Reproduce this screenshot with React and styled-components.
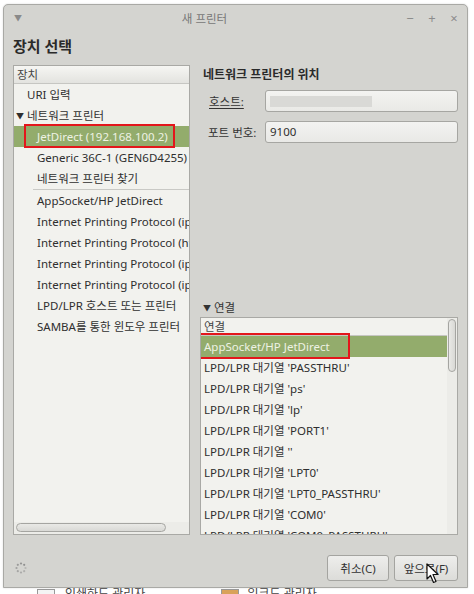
import React from "react";
import styled, { createGlobalStyle } from "styled-components";

const Global = createGlobalStyle`
  html, body { margin: 0; padding: 0; background: #ffffff; }
  body { width: 474px; height: 594px; overflow: hidden; font-family: "Noto Sans", "Noto Sans CJK KR", sans-serif; color: #2f2f2f; }
  * { box-sizing: border-box; }
`;

const Page = styled.div`
  width: 474px;
  height: 594px;
  padding: 4px 6px 0 3px;
  overflow: hidden;
`;

const Window = styled.div`
  position: relative;
  width: 465px;
  height: 584px;
  background: #d4d4d0;
  border: 1px solid #a9a9a5;
  border-radius: 5px 5px 0 0;
  display: flex;
  flex-direction: column;
  box-shadow: 0 0 2px rgba(0,0,0,0.15);
`;

const TitleBar = styled.div`
  height: 25px;
  display: flex;
  align-items: center;
  padding: 0 8px 0 10px;
  color: #7a7a7a;
  font-size: 11.5px;
`;

const TitleMenu = styled.span`
  width: 20px;
  font-size: 8px;
  color: #8a8a8a;
`;

const Title = styled.div`
  flex: 1;
  text-align: center;
  padding-left: 10px;
  padding-right: 40px;
  color: #777;
`;

const WinControls = styled.div`
  display: flex;
  gap: 12px;
  font-size: 13px;
  color: #8c8c8c;
  span { width: 10px; text-align: center; }
`;

const Body = styled.div`
  flex: 1;
  display: flex;
  flex-direction: column;
  padding: 0 9px 6px 9px;
`;

const Heading = styled.div`
  font-size: 15px;
  font-weight: 700;
  line-height: 20px;
  margin-top: 6px;
  color: #2a2a2a;
`;

const Main = styled.div`
  margin-top: 9px;
  height: 470px;
  display: flex;
  gap: 10px;
`;

const DevicePanel = styled.div`
  width: 177px;
  display: flex;
  flex-direction: column;
  background: #f2f2ee;
  border: 1px solid #a9a9a5;
`;

const PanelHeader = styled.div`
  height: 18px;
  line-height: 17px;
  padding-left: ${(p) => p.$pad || 3}px;
  font-size: 11.5px;
  color: #444;
  background: ${(p) => (p.$flat ? "#f2f2ee" : "linear-gradient(#f6f6f3, #e3e3df)")};
  border-bottom: 1px solid #c6c6c2;
  flex: none;
`;

const List = styled.div`
  flex: 1;
  overflow: hidden;
  display: flex;
  flex-direction: column;
`;

const Row = styled.div`
  position: relative;
  flex: none;
  height: 21px;
  line-height: 21px;
  padding-left: ${(p) => p.$indent}px;
  font-size: 11.5px;
  white-space: nowrap;
  background: ${(p) => (p.$selected ? "#93ac6c" : "transparent")};
  color: ${(p) => (p.$selected ? "#eef2e4" : "#2f2f2f")};
`;

const Arrow = styled.span`
  display: inline-block;
  width: 11px;
  font-size: 8px;
  vertical-align: 1px;
`;

const Separator = styled.div`
  height: 1px;
  margin-left: 19px;
  background: #c9c9c5;
  flex: none;
`;

const Annotation = styled.div`
  position: absolute;
  left: ${(p) => p.$left}px;
  top: ${(p) => p.$top}px;
  width: ${(p) => p.$width}px;
  height: ${(p) => p.$height}px;
  border: 2px solid #e3161b;
  pointer-events: none;
`;

const HScroll = styled.div`
  height: 12px;
  padding: 1px 2px 2px 2px;
  background: #ecece8;
  flex: none;
`;

const HThumb = styled.div`
  width: 150px;
  height: 9px;
  border: 1px solid #a5a5a1;
  border-radius: 5px;
  background: linear-gradient(#e9e9e6, #d9d9d5);
`;

const RightCol = styled.div`
  flex: 1;
  display: flex;
  flex-direction: column;
`;

const SectionTitle = styled.div`
  height: 20px;
  line-height: 20px;
  padding-left: 3px;
  font-size: 12px;
  font-weight: 700;
  color: #2a2a2a;
`;

const FormGrid = styled.div`
  margin-top: 5px;
  display: grid;
  grid-template-columns: 57px 1fr;
  row-gap: 9px;
  padding-left: 8px;
  align-items: center;
`;

const Label = styled.span`
  font-size: 11.5px;
  color: #333;
  text-decoration: ${(p) => (p.$underline ? "underline" : "none")};
  text-underline-offset: 2px;
  padding-left: ${(p) => (p.$underline ? 1 : 0)}px;
`;

const Input = styled.div`
  height: 22px;
  border: 1px solid #a6a6a2;
  border-radius: 3px;
  background: linear-gradient(#f3f3f1, #e9e9e6);
  font-size: 11.5px;
  line-height: 20px;
  padding-left: 4px;
  display: flex;
  align-items: center;
`;

const Blurred = styled.div`
  width: 102px;
  height: 11px;
  background: #d9d9d6;
`;

const Expander = styled.div`
  margin-top: auto;
  height: 18px;
  line-height: 18px;
  padding-left: 3px;
  font-size: 11.5px;
  color: #333;
`;

const ConnBox = styled.div`
  height: 218px;
  display: flex;
  background: #f2f2ee;
  border: 1px solid #a9a9a5;
`;

const VScroll = styled.div`
  width: 10px;
  flex: none;
  padding: 1px 1px;
  background: #ecece8;
`;

const VThumb = styled.div`
  height: 53px;
  width: 8px;
  border: 1px solid #a5a5a1;
  border-radius: 4px;
  background: linear-gradient(90deg, #e9e9e6, #d9d9d5);
`;

const Footer = styled.div`
  margin-top: auto;
  display: flex;
  align-items: center;
  gap: 5px;
  padding-left: 1px;
`;

const Spinner = styled.svg`
  margin-right: auto;
`;

const Button = styled.div`
  position: relative;
  width: ${(p) => p.$w}px;
  height: 26px;
  border: 1px solid #a4a4a0;
  border-radius: 3px;
  background: linear-gradient(#eeeeec, #dcdcd9);
  font-size: 11.5px;
  color: #333;
  display: flex;
  align-items: center;
  justify-content: center;
`;

const Cursor = styled.svg`
  position: absolute;
  left: 31px;
  top: 7px;
`;

const DesktopStrip = styled.div`
  display: flex;
  align-items: flex-start;
  height: 10px;
  padding-left: 34px;
  font-size: 12px;
  color: #444;
  line-height: 14px;
  margin-top: 0px;
`;

const DeskIcon = styled.div`
  width: 18px;
  height: 10px;
  margin-top: 1px;
  border: 1px solid #999;
  border-bottom: none;
  background: ${(p) => p.$bg};
  margin-right: ${(p) => p.$mr}px;
`;

const DeskText = styled.span`
  margin-top: -1px;
  margin-right: ${(p) => p.$mr}px;
`;

const leftRows = [
  { t: "URI 입력", indent: 13 },
  { t: "네트워크 프린터", indent: 2, arrow: true },
  { t: "JetDirect (192.168.100.2)", indent: 23, selected: true, mark: true },
  { t: "Generic 36C-1 (GEN6D4255)", indent: 23 },
  { t: "네트워크 프린터 찾기", indent: 23 },
  { sep: true },
  { t: "AppSocket/HP JetDirect", indent: 23 },
  { t: "Internet Printing Protocol (ipp)", indent: 23 },
  { t: "Internet Printing Protocol (https)", indent: 23 },
  { t: "Internet Printing Protocol (ipps)", indent: 23 },
  { t: "Internet Printing Protocol (ipp14)", indent: 23 },
  { t: "LPD/LPR 호스트 또는 프린터", indent: 23 },
  { t: "SAMBA를 통한 윈도우 프린터", indent: 23 },
];

const connRows = [
  "LPD/LPR 대기열 'PASSTHRU'",
  "LPD/LPR 대기열 'ps'",
  "LPD/LPR 대기열 'lp'",
  "LPD/LPR 대기열 'PORT1'",
  "LPD/LPR 대기열 ''",
  "LPD/LPR 대기열 'LPT0'",
  "LPD/LPR 대기열 'LPT0_PASSTHRU'",
  "LPD/LPR 대기열 'COM0'",
  "LPD/LPR 대기열 'COM0_PASSTHRU'",
];

export default function App() {
  return (
    <Page>
      <Global />
      <Window>
        <TitleBar>
          <TitleMenu>▼</TitleMenu>
          <Title>새 프린터</Title>
          <WinControls>
            <span>−</span>
            <span>+</span>
            <span>×</span>
          </WinControls>
        </TitleBar>
        <Body>
          <Heading>장치 선택</Heading>
          <Main>
            <DevicePanel>
              <PanelHeader>장치</PanelHeader>
              <List>
                {leftRows.map((r, i) =>
                  r.sep ? (
                    <Separator key={i} />
                  ) : (
                    <Row key={i} $indent={r.indent} $selected={r.selected}>
                      {r.arrow && <Arrow>▼</Arrow>}
                      {r.t}
                      {r.mark && <Annotation $left={10} $top={-2} $width={151} $height={24} />}
                    </Row>
                  )
                )}
              </List>
              <HScroll>
                <HThumb />
              </HScroll>
            </DevicePanel>
            <RightCol>
              <SectionTitle>네트워크 프린터의 위치</SectionTitle>
              <FormGrid>
                <Label $underline>호스트:</Label>
                <Input>
                  <Blurred />
                </Input>
                <Label>포트 번호:</Label>
                <Input>9100</Input>
              </FormGrid>
              <Expander>
                <Arrow>▼</Arrow>연결
              </Expander>
              <ConnBox>
                <List>
                  <PanelHeader $flat $pad={3}>연결</PanelHeader>
                  <Row $indent={3} $selected>
                    AppSocket/HP JetDirect
                    <Annotation $left={-3} $top={-3} $width={152} $height={26} />
                  </Row>
                  {connRows.map((t, i) => (
                    <Row key={i} $indent={3}>
                      {t}
                    </Row>
                  ))}
                </List>
                <VScroll>
                  <VThumb />
                </VScroll>
              </ConnBox>
            </RightCol>
          </Main>
          <Footer>
            <Spinner width="14" height="14" viewBox="0 0 14 14">
              {Array.from({ length: 8 }).map((_, i) => {
                const a = (i / 8) * Math.PI * 2;
                return (
                  <circle
                    key={i}
                    cx={7 + Math.cos(a) * 4.5}
                    cy={7 + Math.sin(a) * 4.5}
                    r="1.1"
                    fill="#8a8a8a"
                    opacity={0.4 + (i / 8) * 0.6}
                  />
                );
              })}
            </Spinner>
            <Button $w={62}>취소(C)</Button>
            <Button $w={64}>
              앞으로(F)
              <Cursor width="14" height="21" viewBox="0 0 14 21">
                <path
                  d="M1 1 L1 16 L4.5 12.5 L7.5 19.5 L10 18.5 L7 11.5 L12 11.5 Z"
                  fill="#ffffff"
                  stroke="#111"
                  strokeWidth="1.2"
                  strokeLinejoin="round"
                />
              </Cursor>
            </Button>
          </Footer>
        </Body>
      </Window>
      <DesktopStrip>
        <DeskIcon $bg="#f4f4f4" $mr={10} />
        <DeskText $mr={76}>인쇄하드 관리자</DeskText>
        <DeskIcon $bg="#d9a25a" $mr={8} />
        <DeskText $mr={0}>잉크드 관리자</DeskText>
      </DesktopStrip>
    </Page>
  );
}
